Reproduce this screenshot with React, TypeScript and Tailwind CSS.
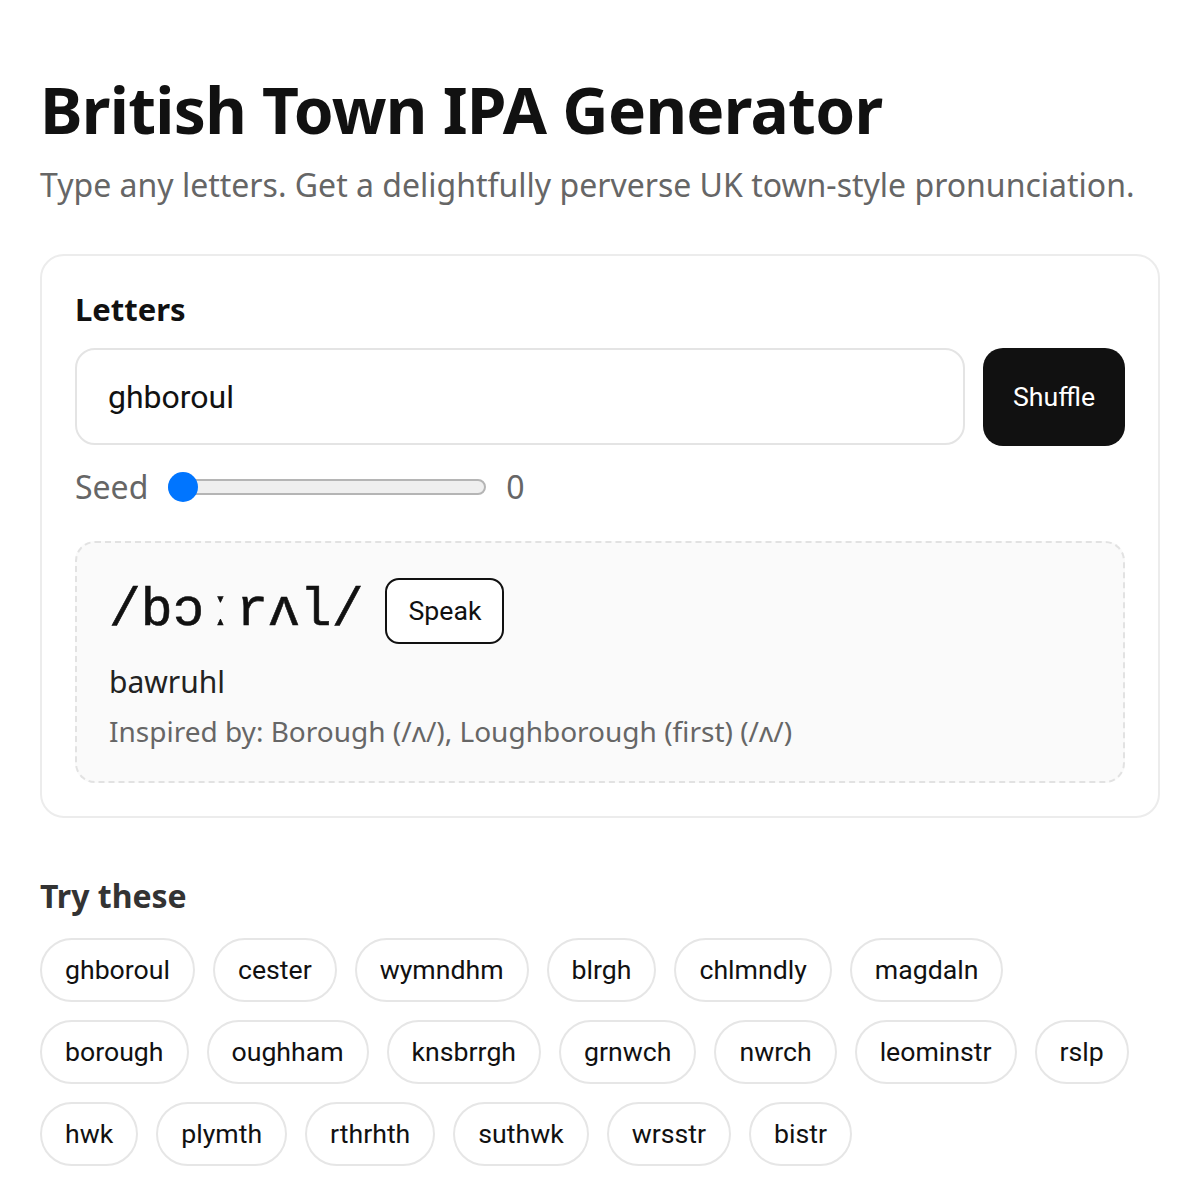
const chips = [
  "ghboroul",
  "cester",
  "wymndhm",
  "blrgh",
  "chlmndly",
  "magdaln",
  "borough",
  "oughham",
  "knsbrrgh",
  "grnwch",
  "nwrch",
  "leominstr",
  "rslp",
  "hwk",
  "plymth",
  "rthrhth",
  "suthwk",
  "wrsstr",
  "bistr",
];

function SeedSlider() {
  return (
    <div className="relative w-[318px] h-[32px] flex items-center">
      <div className="w-full h-[16px] rounded-full bg-[#efefef] border-2 border-[#b5b5b5]" />
      <div className="absolute left-[0px] top-[1px] w-[30px] h-[30px] rounded-full bg-[#0075ff]" />
    </div>
  );
}

export default function App() {
  return (
    <div className="bg-white min-h-[1200px] px-[40px] pt-[72px] font-['Noto_Sans',sans-serif] text-[#111]">
      <h1 className="text-[64px] font-bold leading-[76px] tracking-[-0.7px]">British Town IPA Generator</h1>
      <p className="mt-[15px] text-[32px] leading-[44px] text-[#666]">
        Type any letters. Get a delightfully perverse UK town-style pronunciation.
      </p>

      <section className="mt-[47px] border-2 border-[#ececec] rounded-[24px] p-[33px]">
        <label className="block text-[31px] font-bold leading-[40px]">Letters</label>
        <div className="mt-[19px] flex gap-[18px]">
          <input
            readOnly
            value="ghboroul"
            className="flex-1 h-[97px] px-[31px] border-2 border-[#e4e4e4] rounded-[20px] text-[32px] text-[#111] font-['Roboto',sans-serif] outline-none"
          />
          <button className="w-[142px] h-[98px] rounded-[20px] bg-[#111] text-white text-[26.67px] font-['Roboto',sans-serif]">
            Shuffle
          </button>
        </div>

        <div className="mt-[21px] flex items-center gap-[20px] h-[40px]">
          <span className="text-[32px] text-[#666]">Seed</span>
          <SeedSlider />
          <span className="text-[32px] text-[#666]">0</span>
        </div>

        <div className="mt-[34px] border-2 border-dashed border-[#e2e2e2] bg-[#fafafa] rounded-[20px] px-[32px] pt-[35px] pb-[30px]">
          <div className="flex items-center gap-[22px]">
            <span className="font-['Liberation_Mono',monospace] text-[53px] leading-[66px] text-[#111] [-webkit-text-stroke:0.6px_#111]">/bɔːrʌl/</span>
            <button className="h-[66px] px-[21px] border-2 border-[#111] rounded-[14px] bg-white text-[26.67px] font-['Roboto',sans-serif] text-[#111]">
              Speak
            </button>
          </div>
          <div className="mt-[16px] text-[30px] leading-[44px] text-[#222]">bawruhl</div>
          <div className="mt-[7px] text-[28px] leading-[40px] text-[#666]">
            Inspired by: Borough (/ʌ/), Loughborough (first) (/ʌ/)
          </div>
        </div>
      </section>

      <h2 className="mt-[56px] text-[32px] font-bold leading-[44px] text-[#333]">Try these</h2>
      <div className="mt-[20px] flex flex-wrap gap-[18px]">
        {chips.map((c) => (
          <button
            key={c}
            className="h-[64px] px-[23px] border-2 border-[#e6e6e6] rounded-full bg-white text-[26.67px] font-['Roboto',sans-serif] text-[#111]"
          >
            {c}
          </button>
        ))}
      </div>
    </div>
  );
}
